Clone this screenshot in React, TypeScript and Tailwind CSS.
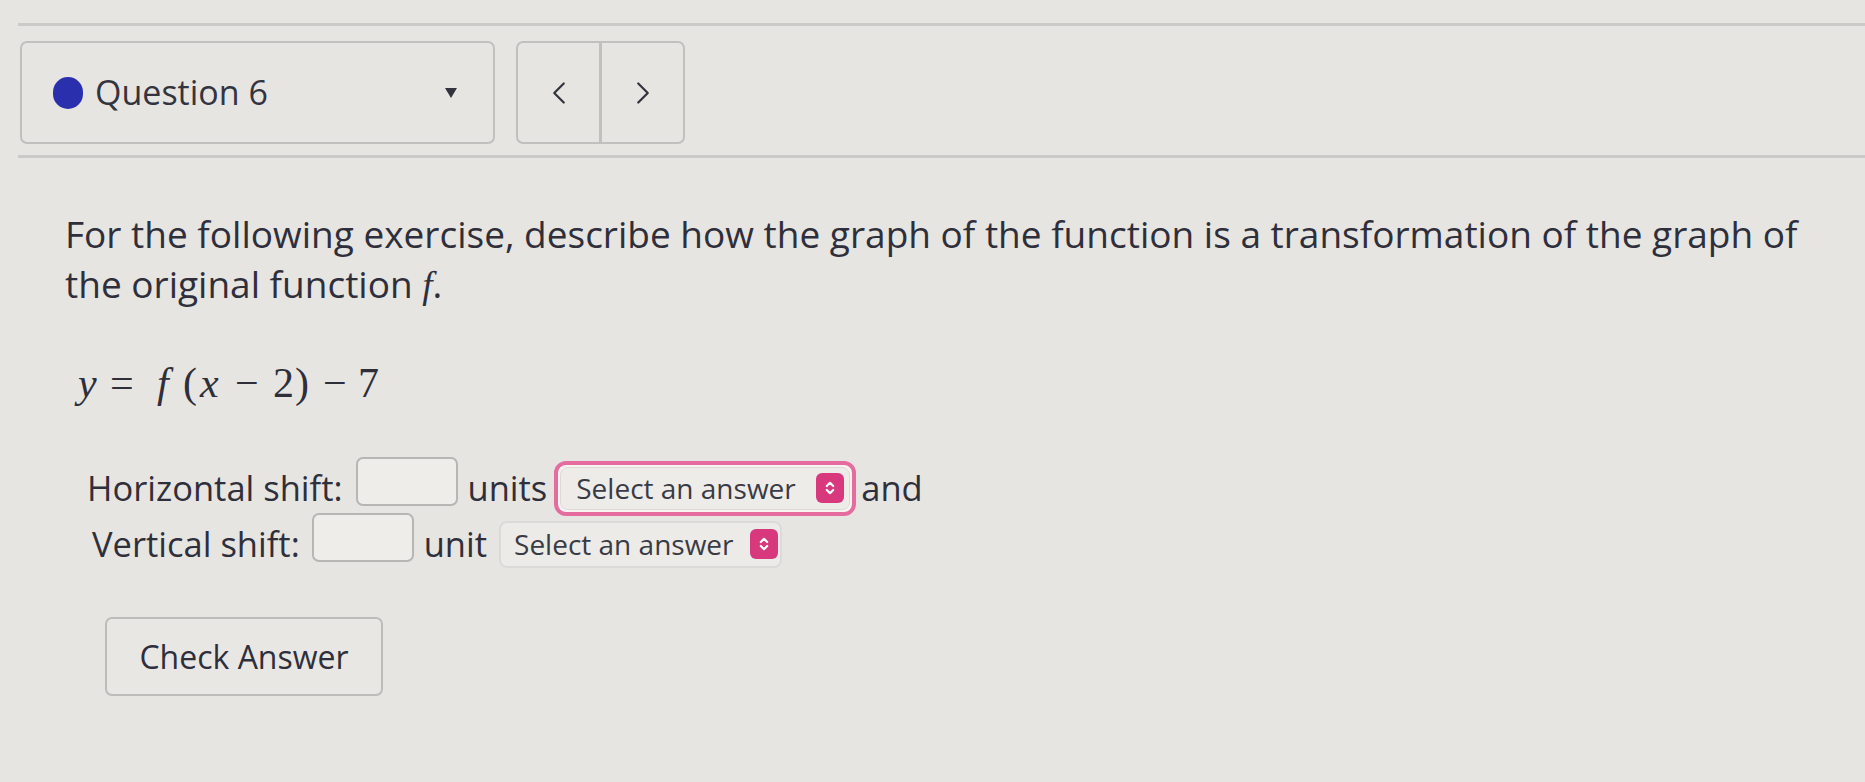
import { ChevronLeft, ChevronRight } from "lucide-react"

function Arrows() {
  return (
    <svg width="12" height="18" viewBox="0 0 12 18" fill="none" stroke="#fff" strokeWidth="2.2" strokeLinecap="round" strokeLinejoin="round">
      <path d="M2.8 7 L6 3.8 L9.2 7" />
      <path d="M2.8 11 L6 14.2 L9.2 11" />
    </svg>
  )
}

function Badge() {
  return (
    <span className="flex h-[30px] w-[28px] items-center justify-center rounded-[6px] bg-[#d8397c]">
      <Arrows />
    </span>
  )
}

function Blank() {
  return <span className="inline-block h-[49px] w-[102px] rounded-[7px] border-2 border-[#b7b6b5] bg-[#efedea]" />
}

export default function App() {
  return (
    <div className="min-h-screen w-full bg-[#e7e5e2] font-['Open_Sans',sans-serif] text-[#2f2f3b]">
      <div className="pt-[23px]">
        <div className="ml-[18px] border-t-[3px] border-[#cbcac8]" />
      </div>

      <div className="mt-[15px] flex gap-[21px] pl-[20px]">
        <div className="flex h-[103px] w-[475px] items-center rounded-[7px] border-2 border-[#c1c0be] pl-[31px] pr-[36px]">
          <span className="h-[32px] w-[30px] rounded-full bg-[#2a2fae]" />
          <span className="ml-[12px] text-[34px] text-[#34343f]">Question 6</span>
          <svg className="ml-auto" width="12" height="10" viewBox="0 0 12 10">
            <path d="M0 0 H12 L6 10 Z" fill="#33333e" />
          </svg>
        </div>
        <div className="flex h-[103px] w-[169px] rounded-[7px] border-2 border-[#c1c0be]">
          <div className="flex w-[84px] items-center justify-center border-r-[3px] border-[#c1c0be]">
            <ChevronLeft size={38} strokeWidth={1.4} className="text-[#33333e]" />
          </div>
          <div className="flex flex-1 items-center justify-center">
            <ChevronRight size={38} strokeWidth={1.4} className="text-[#33333e]" />
          </div>
        </div>
      </div>

      <div className="mt-[11px] ml-[18px] border-t-[3px] border-[#cbcac8]" />

      <div className="pl-[65px] pt-[51px]">
        <p className="text-[37px] leading-[50px]">
          For the following exercise, describe how the graph of the function is a transformation of the graph of
          <br />
          the original function <span className="font-['Liberation_Serif',serif] italic">f</span>.
        </p>

        <div className="mt-[50px] flex h-[44px] items-center pl-[13px] font-['Liberation_Serif',serif] text-[42px] leading-[44px] text-[#2f2f3a]">
          <span className="w-[32px] italic">y</span>
          <span className="w-[47px]">=</span>
          <span className="w-[26px] italic">f</span>
          <span className="w-[17px]">(</span>
          <span className="w-[35px] italic">x</span>
          <span className="w-[38px]">−</span>
          <span className="w-[22px]">2</span>
          <span className="w-[28px]">)</span>
          <span className="w-[35px]">−</span>
          <span>7</span>
        </div>

        <div className="mt-[55px] flex flex-col text-[34.5px]">
          <div className="flex h-[56px] items-center pl-[22px]">
            <span>Horizontal shift:</span>
            <span className="ml-[13px]"><Blank /></span>
            <span className="ml-[10px]">units</span>
            <div className="ml-[7px] flex h-[55px] w-[302px] rounded-[12px] border-[4px] border-[#e66c9f] bg-[#f6f3f1] p-[2px]">
              <div className="flex flex-1 items-center justify-between rounded-[8px] border border-[#dcd9d7] bg-[#eeece9] pl-[15px] pr-[5px] text-[28px] text-[#3a3a45]">
                <span>Select an answer</span>
                <Badge />
              </div>
            </div>
            <span className="ml-[5px]">and</span>
          </div>
          <div className="flex h-[56px] items-center pl-[27px]">
            <span>Vertical shift:</span>
            <span className="ml-[12px]"><Blank /></span>
            <span className="ml-[10px]">unit</span>
            <div className="ml-[12px] flex h-[47px] w-[283px] items-center justify-between rounded-[8px] border-2 border-[#dcdad8] bg-[#ecebe8] pl-[13px] pr-[2px] text-[28px] text-[#3a3a45]">
              <span>Select an answer</span>
              <Badge />
            </div>
          </div>
        </div>

        <button className="mt-[45px] ml-[40px] flex h-[79px] w-[278px] items-center justify-center rounded-[7px] border-2 border-[#bdbcba] bg-[#e9e7e4] text-[32px] text-[#2f2f3b]">
          Check Answer
        </button>
      </div>
    </div>
  )
}
